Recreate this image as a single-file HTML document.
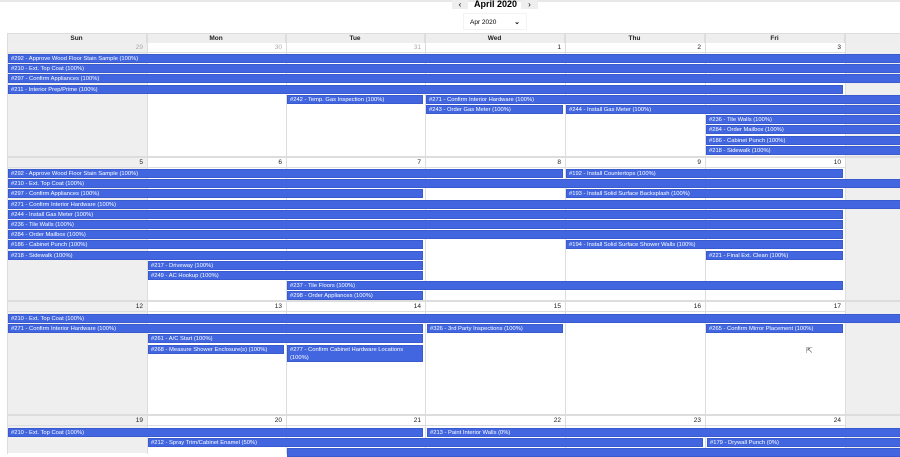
<!DOCTYPE html>
<html><head><meta charset="utf-8"><style>
*{margin:0;padding:0;box-sizing:border-box}
body{width:900px;height:450px;overflow:hidden;background:#fff;font-family:"Liberation Sans",Arial,sans-serif;position:relative}
.a{position:absolute}
.b{position:absolute;height:9px;background:#4166e0;color:#fff;font-size:5.8px;line-height:9px;padding-left:2px;white-space:nowrap;overflow:hidden;border:1px solid #3a5bd0}
.g{background:#efefef}
.d{position:absolute;height:10px;font-size:6.5px;line-height:10px;text-align:right;padding-right:4px;color:#222;border-bottom:1px solid #ddd}
.h{position:absolute;top:34px;height:9px;font-size:6.5px;font-weight:bold;line-height:9px;text-align:center;background:#eee;border-right:1px solid #ddd;color:#222}
.v{position:absolute;width:1px;background:#ddd}
.w{position:absolute;left:7px;width:900px;height:2px;background:#ddd}
</style></head><body>
<div class="a" style="left:0;top:0;width:900px;height:2px;background:#e8e8e8"></div>
<div class="a" style="left:452px;top:0;width:16px;height:9px;background:#eee;font-size:8px;line-height:9px;text-align:center">‹</div>
<div class="a" style="left:474px;top:-1px;font-size:9px;font-weight:bold">April 2020</div>
<div class="a" style="left:521px;top:0;width:17px;height:9px;background:#eee;font-size:8px;line-height:9px;text-align:center">›</div>
<div class="a" style="left:463px;top:13px;width:64px;height:17px;border:1px solid #f3f3f3;font-size:6.5px;line-height:17px;padding-left:6px">Apr 2020<span style="position:absolute;right:6px;top:0;font-size:7px;font-weight:bold">⌄</span></div>
<div class="a" style="left:7px;top:33px;width:900px;height:1px;background:#ddd"></div>
<div class="h" style="left:7px;width:140px">Sun</div>
<div class="h" style="left:147px;width:139px">Mon</div>
<div class="h" style="left:286px;width:139px">Tue</div>
<div class="h" style="left:425px;width:140px">Wed</div>
<div class="h" style="left:565px;width:140px">Thu</div>
<div class="h" style="left:705px;width:140px">Fri</div>
<div class="h" style="left:845px;width:60px"></div>
<div class="a g" style="left:7px;top:43px;width:140px;height:410px"></div>
<div class="a g" style="left:845px;top:43px;width:60px;height:410px"></div>
<div class="v" style="left:7px;top:34px;height:420px"></div>
<div class="v" style="left:147px;top:34px;height:420px"></div>
<div class="v" style="left:286px;top:34px;height:420px"></div>
<div class="v" style="left:425px;top:34px;height:420px"></div>
<div class="v" style="left:565px;top:34px;height:420px"></div>
<div class="v" style="left:705px;top:34px;height:420px"></div>
<div class="v" style="left:845px;top:34px;height:420px"></div>
<div class="w" style="top:156px"></div>
<div class="w" style="top:300px"></div>
<div class="w" style="top:414px"></div>
<div class="d" style="left:7px;top:43px;width:140px;color:#aaa">29</div>
<div class="d" style="left:147px;top:43px;width:139px;color:#aaa">30</div>
<div class="d" style="left:286px;top:43px;width:139px;color:#aaa">31</div>
<div class="d" style="left:425px;top:43px;width:140px">1</div>
<div class="d" style="left:565px;top:43px;width:140px">2</div>
<div class="d" style="left:705px;top:43px;width:140px">3</div>
<div class="d" style="left:7px;top:158px;width:140px">5</div>
<div class="d" style="left:147px;top:158px;width:139px">6</div>
<div class="d" style="left:286px;top:158px;width:139px">7</div>
<div class="d" style="left:425px;top:158px;width:140px">8</div>
<div class="d" style="left:565px;top:158px;width:140px">9</div>
<div class="d" style="left:705px;top:158px;width:140px">10</div>
<div class="d" style="left:7px;top:302px;width:140px">12</div>
<div class="d" style="left:147px;top:302px;width:139px">13</div>
<div class="d" style="left:286px;top:302px;width:139px">14</div>
<div class="d" style="left:425px;top:302px;width:140px">15</div>
<div class="d" style="left:565px;top:302px;width:140px">16</div>
<div class="d" style="left:705px;top:302px;width:140px">17</div>
<div class="d" style="left:7px;top:416px;width:140px">19</div>
<div class="d" style="left:147px;top:416px;width:139px">20</div>
<div class="d" style="left:286px;top:416px;width:139px">21</div>
<div class="d" style="left:425px;top:416px;width:140px">22</div>
<div class="d" style="left:565px;top:416px;width:140px">23</div>
<div class="d" style="left:705px;top:416px;width:140px">24</div>
<div class="b" style="left:8px;top:54px;width:900px">#292 - Approve Wood Floor Stain Sample (100%)</div>
<div class="b" style="left:8px;top:64px;width:900px">#210 - Ext. Top Coat (100%)</div>
<div class="b" style="left:8px;top:74px;width:900px">#297 - Confirm Appliances (100%)</div>
<div class="b" style="left:8px;top:85px;width:835px">#211 - Interior Prep/Prime (100%)</div>
<div class="b" style="left:287px;top:95px;width:136px">#242 - Temp. Gas Inspection (100%)</div>
<div class="b" style="left:426px;top:95px;width:480px">#271 - Confirm Interior Hardware (100%)</div>
<div class="b" style="left:426px;top:105px;width:137px">#243 - Order Gas Meter (100%)</div>
<div class="b" style="left:566px;top:105px;width:340px">#244 - Install Gas Meter (100%)</div>
<div class="b" style="left:706px;top:115px;width:200px">#236 - Tile Walls (100%)</div>
<div class="b" style="left:706px;top:125px;width:200px">#284 - Order Mailbox (100%)</div>
<div class="b" style="left:706px;top:136px;width:200px">#186 - Cabinet Punch (100%)</div>
<div class="b" style="left:706px;top:146px;width:200px">#218 - Sidewalk (100%)</div>
<div class="b" style="left:8px;top:169px;width:555px">#292 - Approve Wood Floor Stain Sample (100%)</div>
<div class="b" style="left:566px;top:169px;width:277px">#192 - Install Countertops (100%)</div>
<div class="b" style="left:8px;top:179px;width:900px">#210 - Ext. Top Coat (100%)</div>
<div class="b" style="left:8px;top:189px;width:415px">#297 - Confirm Appliances (100%)</div>
<div class="b" style="left:566px;top:189px;width:277px">#193 - Install Solid Surface Backsplash (100%)</div>
<div class="b" style="left:8px;top:200px;width:900px">#271 - Confirm Interior Hardware (100%)</div>
<div class="b" style="left:8px;top:210px;width:835px">#244 - Install Gas Meter (100%)</div>
<div class="b" style="left:8px;top:220px;width:835px">#236 - Tile Walls (100%)</div>
<div class="b" style="left:8px;top:230px;width:835px">#284 - Order Mailbox (100%)</div>
<div class="b" style="left:8px;top:240px;width:415px">#186 - Cabinet Punch (100%)</div>
<div class="b" style="left:566px;top:240px;width:277px">#194 - Install Solid Surface Shower Walls (100%)</div>
<div class="b" style="left:8px;top:251px;width:415px">#218 - Sidewalk (100%)</div>
<div class="b" style="left:706px;top:251px;width:137px">#221 - Final Ext. Clean (100%)</div>
<div class="b" style="left:148px;top:261px;width:275px">#217 - Driveway (100%)</div>
<div class="b" style="left:148px;top:271px;width:275px">#249 - AC Hookup (100%)</div>
<div class="b" style="left:287px;top:281px;width:556px">#237 - Tile Floors (100%)</div>
<div class="b" style="left:287px;top:291px;width:136px">#298 - Order Appliances (100%)</div>
<div class="b" style="left:8px;top:314px;width:900px">#210 - Ext. Top Coat (100%)</div>
<div class="b" style="left:8px;top:324px;width:415px">#271 - Confirm Interior Hardware (100%)</div>
<div class="b" style="left:427px;top:324px;width:136px">#326 - 3rd Party Inspections (100%)</div>
<div class="b" style="left:706px;top:324px;width:137px">#265 - Confirm Mirror Placement (100%)</div>
<div class="b" style="left:148px;top:334px;width:275px">#261 - A/C Start (100%)</div>
<div class="b" style="left:148px;top:345px;width:136px">#268 - Measure Shower Enclosure(s) (100%)</div>
<div class="b" style="left:287px;top:345px;width:136px;height:17px;white-space:normal;line-height:7.5px;padding-top:1px">#277 - Confirm Cabinet Hardware Locations (100%)</div>
<div class="a" style="left:806px;top:346px;font-size:8px;color:#555">⇱</div>
<div class="b" style="left:8px;top:428px;width:415px">#210 - Ext. Top Coat (100%)</div>
<div class="b" style="left:427px;top:428px;width:480px">#213 - Paint Interior Walls (0%)</div>
<div class="b" style="left:148px;top:438px;width:555px">#212 - Spray Trim/Cabinet Enamel (50%)</div>
<div class="b" style="left:707px;top:438px;width:200px">#179 - Drywall Punch (0%)</div>
<div class="b" style="left:287px;top:448px;width:620px"></div>
</body></html>
